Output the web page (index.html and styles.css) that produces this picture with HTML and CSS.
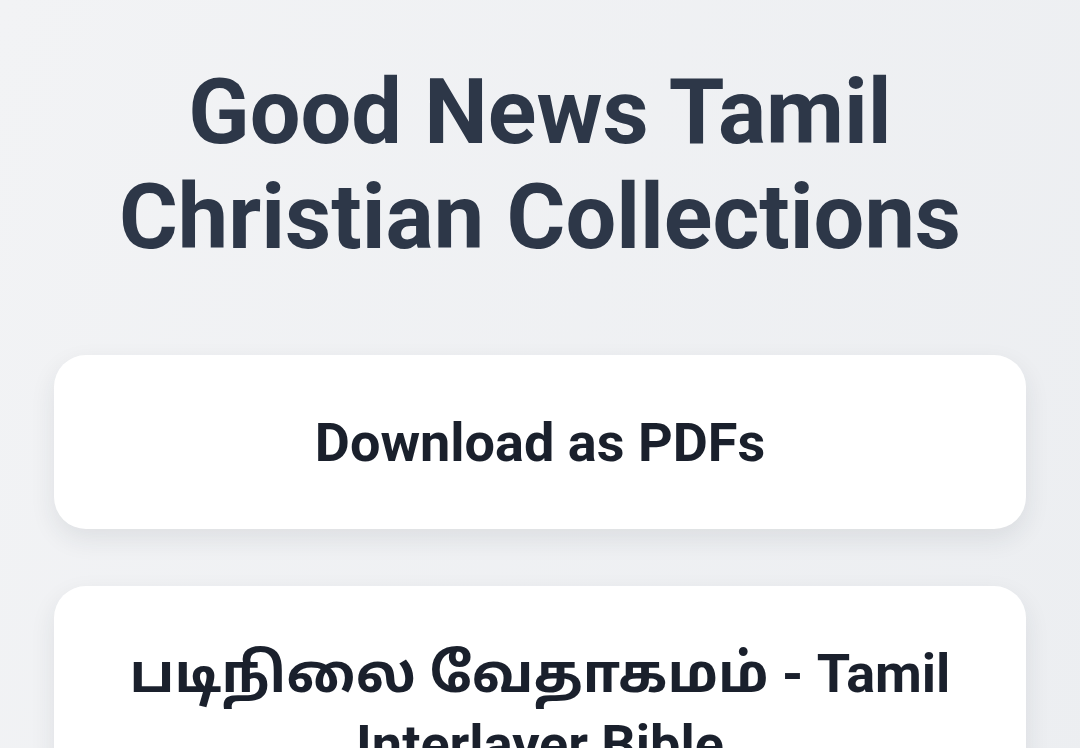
FILE: index.html
```html
<!DOCTYPE html>
<html>
<head>
   <meta charset="utf-8">
   <meta name="viewport" content="width=device-width, initial-scale=1">
   <title>Good News Tamil Christian Collections</title>
   <link rel="stylesheet" href="styles.css">
</head>
<body>
   <main class="page">
      <h1 class="head">Good News Tamil Christian Collections</h1>
      <div class="cards">
         <a class="card" href="#">Download as PDFs</a>
         <a class="card" href="#">படிநிலை வேதாகமம் - Tamil Interlayer Bible</a>
      </div>
   </main>
</body>
</html>
```

FILE: styles.css
```css
body{
   margin: 0;
   min-height: 100vh;
   background: linear-gradient(110deg, #f2f3f5 0%, #eceef1 100%);
   font-family: Roboto, "Noto Sans Tamil", "Noto Sans", sans-serif;
}

.page{
   padding: 60px 54px 40px;
}

h1.head{
   margin: 0 0 85px;
   text-align: center;
   color: #2d3748;
   font-size: 90px;
   line-height: 105px;
   font-weight: 700;
}

.cards{
   display: flex;
   flex-direction: column;
   gap: 57px;
}

.card{
   display: block;
   padding: 51.5px 40px;
   background-color: #ffffff;
   border-radius: 32px;
   box-shadow: 0 10px 26px rgba(30, 40, 60, 0.09);
   color: #1a202c;
   text-align: center;
   text-decoration: none;
   font-size: 54px;
   line-height: 71px;
   font-weight: 700;
}
```
